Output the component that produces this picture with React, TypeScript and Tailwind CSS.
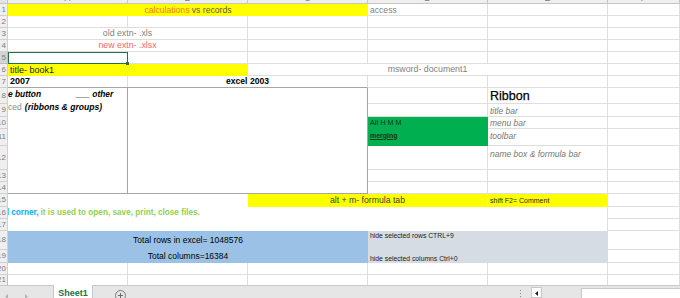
import React from "react";

const T =
  "grid grid-cols-[8px_120px_120px_120px_120px_120px_72px] grid-rows-[4px_12px_12px_12px_12px_12px_12px_12px_16px_13px_12px_17px_24px_12px_12px_13px_12px_12px_19px_13px_12px_10px]";

const cols = ["A", "B", "C", "D", "E", "F"];
const rows = Array.from({ length: 21 }, (_, i) => i + 1);

function GridLines() {
  return (
    <div className={`${T} col-start-1 row-start-1`}>
      <div className="bg-[#e4e4e4] border-r border-b border-[#c6c6c6]" />
      {cols.map((c) => (
        <div
          key={c}
          className="bg-[#efefef] border-r border-b border-[#c6c6c6] overflow-hidden flex justify-center items-end"
        >
          <span className="text-[9px] leading-[9px] text-[#7a7a7a]">{c}</span>
        </div>
      ))}
      {rows.map((r) => (
        <React.Fragment key={r}>
          <div
            className={
              r === 5
                ? "bg-[#d4d4d4] border-r border-b border-[#bdbdbd] flex items-center justify-end overflow-hidden pr-[1px]"
                : r === 21
                ? "bg-[#efefef] border-r border-[#bdbdbd] flex items-center justify-end overflow-hidden pr-[1px]"
                : "bg-[#efefef] border-r border-b border-[#d0d0d0] flex items-center justify-end overflow-hidden pr-[1px]"
            }
          >
            <span className="text-[8px] text-[#7b7b7b] whitespace-nowrap">{r}</span>
          </div>
          {cols.map((c) => (
            <div
              key={c}
              className={r === 21 ? "border-r border-[#dedede]" : "border-r border-b border-[#dedede]"}
            />
          ))}
        </React.Fragment>
      ))}
    </div>
  );
}

function Content() {
  return (
    <div className={`${T} col-start-1 row-start-1`}>
      {/* Row 1 */}
      <div className="row-start-2 col-start-2 col-span-3 bg-[#ffff00] flex items-center justify-center text-[8.6px] whitespace-nowrap">
        <span>
          <span className="text-[#ed7d31]">calculations</span>
          <span className="text-[#595959]"> vs records</span>
        </span>
      </div>
      <div className="row-start-2 col-start-5 flex items-center pl-[2px] text-[8.6px] text-[#7f7f7f] whitespace-nowrap">
        access
      </div>

      {/* Row 3 / 4 */}
      <div className="row-start-4 col-start-2 col-span-2 bg-white border-r border-b border-[#dedede] flex items-center justify-center text-[8.8px] text-[#7f7f7f] whitespace-nowrap">
        old extn- .xls
      </div>
      <div className="row-start-5 col-start-2 col-span-2 bg-white border-r border-b border-[#dedede] flex items-center justify-center text-[8.8px] text-[#ff6666] whitespace-nowrap">
        new extn- .xlsx
      </div>

      {/* Row 5 selection */}
      <div className="row-start-6 col-start-2 relative border border-[#217346]">
        <div className="absolute right-[-2px] bottom-[-2px] w-[3px] h-[3px] bg-[#217346]" />
      </div>

      {/* Row 6 */}
      <div className="row-start-7 col-start-2 col-span-2 bg-[#ffff00] flex items-center pl-[2px] text-[9px] text-[#1a1a1a] whitespace-nowrap">
        title- book1
      </div>
      <div className="row-start-7 col-start-4 col-span-3 bg-white border-r border-b border-[#dedede] flex items-center justify-center text-[8.8px] text-[#7f7f7f] whitespace-nowrap">
        msword- document1
      </div>

      {/* Row 7 */}
      <div className="row-start-8 col-start-2 border-b border-[#a6a6a6] flex items-center pl-[2px] text-[9px] font-bold whitespace-nowrap">
        2007
      </div>
      <div className="row-start-8 col-start-3 col-span-2 bg-white border-r border-b border-r-[#dedede] border-b-[#a6a6a6] flex items-center justify-center text-[8.6px] font-bold whitespace-nowrap">
        excel 2003
      </div>

      {/* Rows 8-14 box */}
      <div className="row-start-9 row-span-7 col-start-2 bg-white border-r border-b border-[#a6a6a6] flex flex-col overflow-hidden">
        <div className="h-[12px] flex items-center text-[8.4px] font-bold italic whitespace-nowrap">
          <span>e button</span>
          <span className="ml-[35px]">___ other</span>
        </div>
        <div className="h-[14px] flex items-center text-[8.6px] whitespace-nowrap">
          <span className="text-[#8a8a8a]">ced</span>
          <span className="ml-[3px] font-bold italic">(ribbons &amp; groups)</span>
        </div>
      </div>
      <div className="row-start-9 row-span-7 col-start-3 col-span-2 bg-white border-r border-b border-[#a6a6a6]" />

      {/* Column E notes */}
      <div className="row-start-9 col-start-6 flex items-center pl-[2px] text-[12.5px] text-black whitespace-nowrap [-webkit-text-stroke:0.25px_#000]">
        Ribbon
      </div>
      <div className="row-start-10 col-start-6 flex items-center pl-[2px] pt-[2px] text-[8.5px] italic text-[#767676] whitespace-nowrap">
        title bar
      </div>
      <div className="row-start-11 col-start-6 flex items-center pl-[2px] text-[8.5px] italic text-[#767676] whitespace-nowrap">
        menu bar
      </div>
      <div className="row-start-12 col-start-6 flex items-start pl-[2px] pt-[2px] text-[8.5px] leading-[10px] italic text-[#767676] whitespace-nowrap">
        toolbar
      </div>
      <div className="row-start-13 col-start-6 flex items-start pl-[2px] pt-[3px] text-[8.5px] leading-[10px] italic text-[#767676] whitespace-nowrap">
        name box &amp; formula bar
      </div>

      {/* Green D10:D11 */}
      <div className="row-start-11 row-span-2 col-start-5 bg-[#00b050] flex flex-col pl-[2px] text-[#173617]">
        <div className="h-[12px] flex items-center text-[7.2px] whitespace-nowrap">Alt H M M</div>
        <div className="h-[12px] flex items-center text-[7px] font-bold underline whitespace-nowrap">merging</div>
      </div>

      {/* Row 15 */}
      <div className="row-start-16 col-start-2 col-span-2 bg-white" />
      <div className="row-start-16 col-start-4 col-span-2 bg-[#ffff00] border-r border-[#f4f4f4] flex items-center justify-center text-[8.7px] text-[#404040] whitespace-nowrap">
        alt + m- formula tab
      </div>
      <div className="row-start-16 col-start-6 bg-[#ffff00] flex items-center pl-[2px] text-[7px] text-[#262626] whitespace-nowrap">
        shift F2= Comment
      </div>

      {/* Rows 16-17 */}
      <div className="row-start-17 row-span-2 col-start-2 col-span-5 bg-white border-r border-[#dedede] flex flex-col overflow-hidden">
        <div className="h-[12px] flex items-center text-[8.2px] font-bold whitespace-nowrap overflow-hidden">
          <span className="text-[#00b0f0] -ml-[4px]">d corner,</span>
          <span className="text-[#92d050] ml-[2px]">it is used to open, save, print, close files.</span>
        </div>
      </div>

      {/* Rows 18-19 */}
      <div className="row-start-19 col-start-2 col-span-3 bg-[#9bc2e6] flex items-center justify-center text-[8.5px] whitespace-nowrap">
        Total rows in excel= 1048576
      </div>
      <div className="row-start-20 col-start-2 col-span-3 bg-[#9bc2e6] flex items-center justify-center text-[8.5px] whitespace-nowrap">
        Total columns=16384
      </div>
      <div className="row-start-19 row-span-2 col-start-5 col-span-2 bg-[#d6dce4] flex flex-col justify-between pl-[2px] pt-[1px] text-[6.8px] text-[#1a1a1a] whitespace-nowrap">
        <span className="leading-[8px]">hide selected rows CTRL+9</span>
        <span className="leading-[8px]">hide selected columns Ctrl+0</span>
      </div>
    </div>
  );
}

function TabBar() {
  return (
    <div className="flex h-[13px] border-t border-[#c8c8c8] bg-[#e6e6e6]">
      <div className="w-[53px] flex items-start pt-[8px]">
        <svg className="ml-[5px]" width="3" height="5" viewBox="0 0 3 5">
          <path d="M3 0 L0 2.5 L3 5Z" fill="#b4b4b4" />
        </svg>
        <svg className="ml-[17px]" width="3" height="5" viewBox="0 0 3 5">
          <path d="M0 0 L3 2.5 L0 5Z" fill="#b4b4b4" />
        </svg>
      </div>
      <div className="w-[40px] -mt-px h-[13px] bg-white border-x border-[#c8c8c8] flex justify-center pt-[4px]">
        <span className="text-[9px] leading-[9px] font-bold text-[#217346]">Sheet1</span>
      </div>
      <div className="ml-[22px] mt-[4px] w-[11px] h-[11px] rounded-full border border-[#7a7a7a] flex items-center justify-center">
        <svg width="7" height="7" viewBox="0 0 7 7">
          <path d="M3.5 1v5M1 3.5h5" stroke="#6a6a6a" strokeWidth="1" />
        </svg>
      </div>
      <div className="flex-1" />
      <div className="w-[161px] flex">
        <div className="w-[3px] flex flex-col gap-[2px] pt-[4px] items-center">
          <div className="w-[1px] h-[1px] bg-[#8a8a8a]" />
          <div className="w-[1px] h-[1px] bg-[#8a8a8a]" />
          <div className="w-[1px] h-[1px] bg-[#8a8a8a]" />
        </div>
        <div className="w-[9px]" />
        <div className="w-[11px] mt-[1px] bg-white border border-[#c8c8c8] flex justify-center pt-[3px]">
          <svg width="3" height="5" viewBox="0 0 3 5">
            <path d="M3 0 L0 2.5 L3 5Z" fill="#222" />
          </svg>
        </div>
        <div className="w-[39px]" />
        <div className="flex-1 mt-[2px] bg-white border-l border-t border-[#c8c8c8]" />
      </div>
    </div>
  );
}

export default function App() {
  return (
    <div className="w-[680px] h-[298px] overflow-hidden bg-white leading-none text-black font-['Liberation_Sans',Arial,sans-serif]">
      <div className="grid">
        <GridLines />
        <Content />
      </div>
      <TabBar />
    </div>
  );
}
